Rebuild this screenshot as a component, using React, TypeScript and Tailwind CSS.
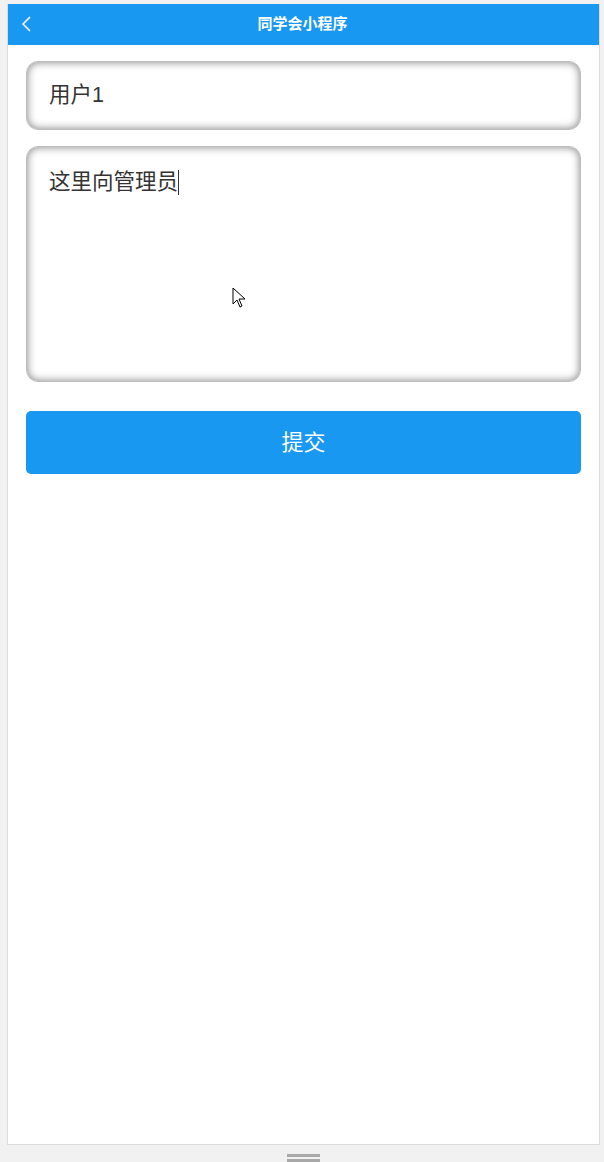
import React from "react";

export default function App() {
  return (
    <div
      className="w-[604px] h-[1162px] bg-[#f1f1f1] flex flex-col items-start pt-[4px] pl-[7px]"
      style={{ fontFamily: '"Liberation Sans", "Noto Sans CJK SC", sans-serif' }}
    >
      <div className="w-[593px] h-[1142px] bg-white border border-[#dcdcdc] border-t-0 flex flex-col">
        <div className="h-[41px] bg-[#1898f0] flex items-center relative">
          <svg className="absolute left-[12px] top-[11px]" width="14" height="18" viewBox="0 0 14 18">
            <path d="M10 2 L3 9 L10 16" fill="none" stroke="white" strokeWidth="1.6" />
          </svg>
          <div className="flex-1 text-center text-white text-[15px] font-bold pr-[2px]">同学会小程序</div>
        </div>
        <div className="px-[18px] pt-[16px] flex flex-col">
          <div className="h-[69px] rounded-[12px] border border-[#bdbdbd] shadow-[inset_0_0_9px_rgba(0,0,0,0.5)] flex items-center px-[22px] text-[21.5px] text-[#333]">
            用户1
          </div>
          <div className="mt-[16px] h-[236px] rounded-[12px] border border-[#bdbdbd] shadow-[inset_0_0_9px_rgba(0,0,0,0.5)] px-[22px] pt-[19px] text-[21.5px] text-[#333] relative">
            <span>这里向管理员</span>
            <span className="inline-block w-[1px] h-[25px] bg-[#333] align-middle -mt-[2px]"></span>
            <svg className="absolute left-[205px] top-[140px]" width="16" height="24" viewBox="0 0 16 24">
              <path d="M1 1 L1 17 L5 13 L8 20 L10 19 L7 12 L13 12 Z" fill="white" stroke="black" strokeWidth="1" />
            </svg>
          </div>
          <button className="mt-[29px] h-[63px] rounded-[5px] bg-[#1898f0] text-white text-[22px]">
            提交
          </button>
        </div>
      </div>
      <div className="w-[593px] flex flex-col items-center pt-[9px] gap-[2px]">
        <div className="w-[33px] h-[3px] bg-[#a8a8a8]"></div>
        <div className="w-[33px] h-[3px] bg-[#a8a8a8]"></div>
      </div>
    </div>
  );
}
